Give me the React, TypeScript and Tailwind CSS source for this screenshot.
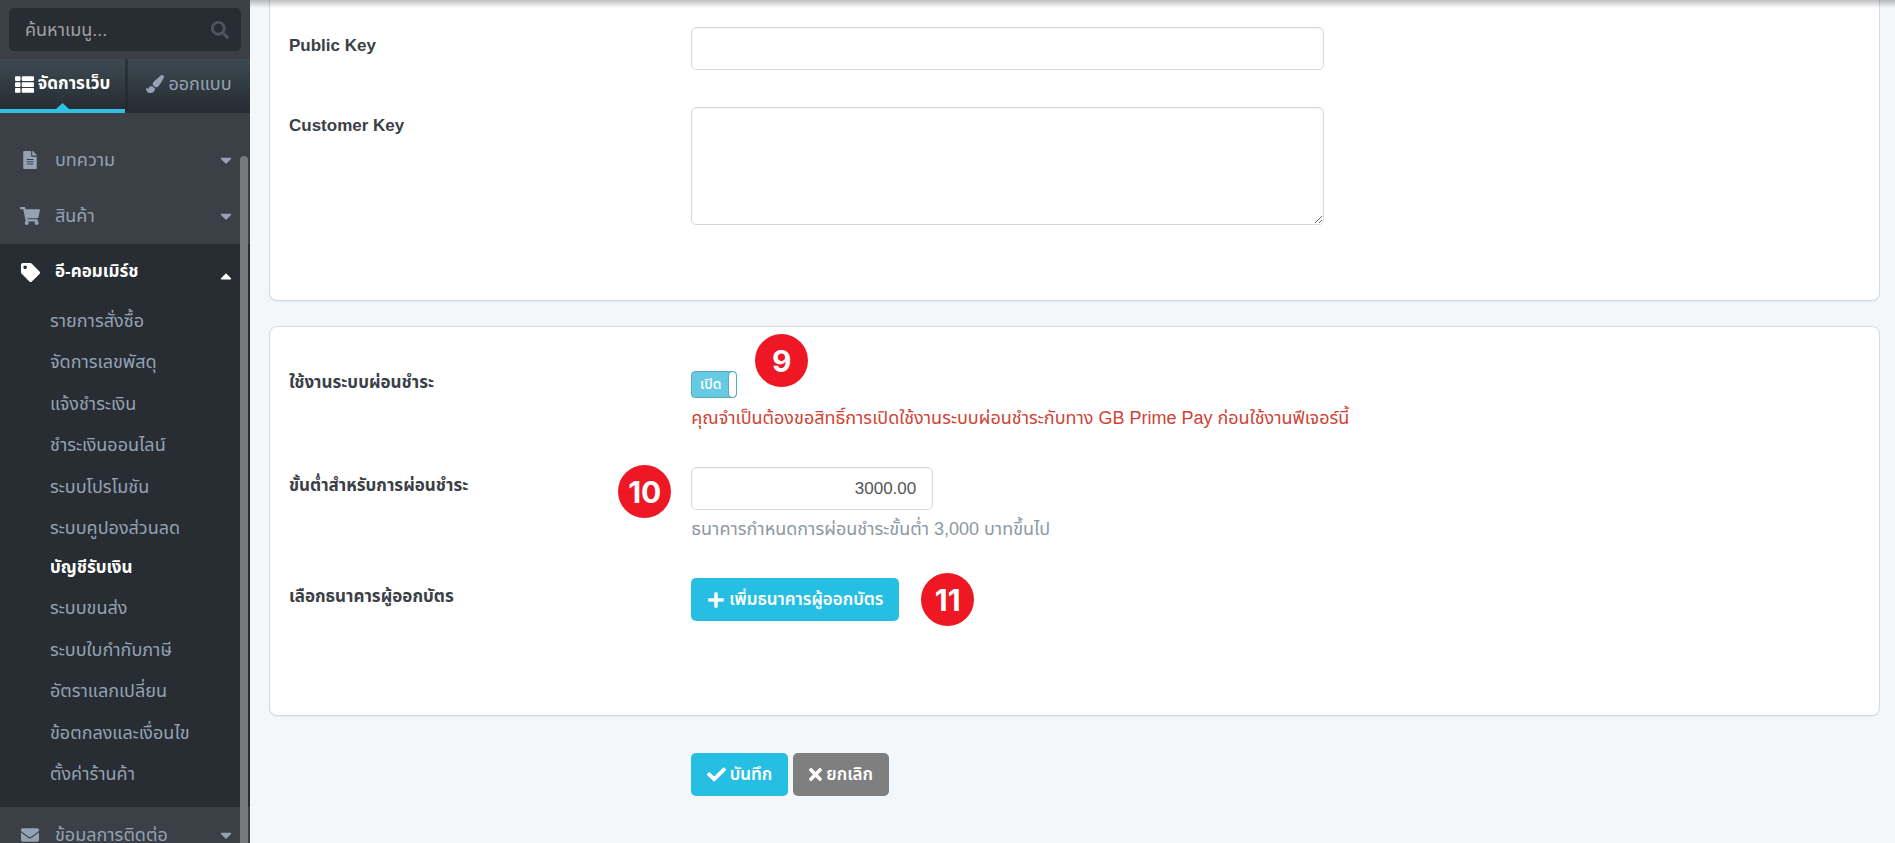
import { useState } from "react";
import type { ReactNode } from "react";
import {
  FaCaretDown,
  FaCaretUp,
  FaCheck,
  FaEnvelope,
  FaFileAlt,
  FaPaintBrush,
  FaPlus,
  FaSearch,
  FaShoppingCart,
  FaTag,
  FaThList,
  FaTimes,
} from "react-icons/fa";

const ecommerceMenu = [
  "รายการสั่งซื้อ",
  "จัดการเลขพัสดุ",
  "แจ้งชำระเงิน",
  "ชำระเงินออนไลน์",
  "ระบบโปรโมชัน",
  "ระบบคูปองส่วนลด",
  "บัญชีรับเงิน",
  "ระบบขนส่ง",
  "ระบบใบกำกับภาษี",
  "อัตราแลกเปลี่ยน",
  "ข้อตกลงและเงื่อนไข",
  "ตั้งค่าร้านค้า",
];

const inputClass =
  "block rounded-[5px] border border-[#d2dbe0] bg-white px-4 text-[17px] text-[#555] shadow-[inset_0_1px_2px_rgba(0,0,0,0.06)] outline-none";

function MenuItem({
  icon,
  title,
  open = false,
}: {
  icon: ReactNode;
  title: string;
  open?: boolean;
}) {
  return (
    <button
      className={`flex h-14 w-full shrink-0 items-center pr-[15px] pl-5 text-left ${
        open ? "text-[17px] font-bold text-white" : "text-lg text-[#95a2b3]"
      }`}
    >
      <span className="flex w-5 justify-center">{icon}</span>
      <span className="ml-[15px] flex-1">{title}</span>
      {open ? (
        <FaCaretUp className="mt-2 h-[18px] w-[18px]" />
      ) : (
        <FaCaretDown className="h-[18px] w-[18px]" />
      )}
    </button>
  );
}

function Sidebar() {
  return (
    <aside className="relative flex h-screen w-[250px] shrink-0 flex-col overflow-hidden bg-[#3a4046]">
      {/* ค้นหาเมนู */}
      <div className="px-[9px] py-2">
        <div className="flex h-[43px] items-center rounded-[5px] bg-[#272d33] pr-3 pl-4">
          <input
            aria-label="ค้นหาเมนู"
            placeholder="ค้นหาเมนู..."
            className="min-w-0 flex-1 bg-transparent text-lg text-white outline-none placeholder:text-[#a0a0a0]"
          />
          <FaSearch className="h-[18px] w-[18px] text-[#4d555e]" />
        </div>
      </div>

      {/* แท็บ */}
      <div className="flex h-[54px] shrink-0 bg-linear-to-b from-[#3d4a52] to-[#262b31]">
        <button className="relative flex w-[125px] items-center justify-center gap-1 border-b-4 border-[#2fc0e4] text-[17px] font-bold text-white">
          <FaThList className="h-[19px] w-[19px]" />
          จัดการเว็บ
          <svg
            className="absolute bottom-0 left-[56px]"
            width="13"
            height="6"
            viewBox="0 0 13 6"
          >
            <path d="M0 6 6.5 0 13 6z" fill="#2fc0e4" />
          </svg>
        </button>
        <button className="flex flex-1 items-center justify-center gap-1 border-b-4 border-l-[3px] border-b-transparent border-l-[#20262b]/60 text-lg text-[#95a2b3]">
          <FaPaintBrush className="h-[18px] w-[18px]" />
          ออกแบบ
        </button>
      </div>

      {/* เมนู */}
      <nav className="flex flex-1 flex-col pt-[19px]">
        <MenuItem
          icon={<FaFileAlt className="h-[18px] w-[18px]" />}
          title="บทความ"
        />
        <MenuItem
          icon={<FaShoppingCart className="h-5 w-5" />}
          title="สินค้า"
        />
        <div className="shrink-0 bg-[#272d33] pb-3">
          <MenuItem
            icon={<FaTag className="h-[19px] w-[19px]" />}
            title="อี-คอมเมิร์ช"
            open
          />
          <ul className="grid h-[495px]">
            {ecommerceMenu.map((name) => (
              <li key={name} className="flex items-center pl-[50px]">
                <a
                  href="#"
                  className={
                    name === "บัญชีรับเงิน"
                      ? "text-[17px] font-bold text-white"
                      : "text-lg text-[#95a2b3]"
                  }
                >
                  {name}
                </a>
              </li>
            ))}
          </ul>
        </div>
        <MenuItem
          icon={<FaEnvelope className="h-[18px] w-[18px]" />}
          title="ข้อมูลการติดต่อ"
        />
      </nav>

      {/* แถบเลื่อน */}
      <div className="absolute top-[156px] right-[2px] bottom-0 w-2 rounded-t-full bg-[#75797b]" />
    </aside>
  );
}

function FormRow({
  label,
  htmlFor,
  children,
}: {
  label: string;
  htmlFor: string;
  children: ReactNode;
}) {
  return (
    <div className="grid grid-cols-12">
      <label
        htmlFor={htmlFor}
        className="col-span-3 px-[19px] pt-[7px] text-[17px] leading-6 font-bold text-[#3a4046]"
      >
        {label}
      </label>
      {children}
    </div>
  );
}

function StepBadge({ step, className }: { step: number; className: string }) {
  return (
    <span
      className={`absolute flex h-[53px] w-[53px] items-center justify-center rounded-full bg-[#ee1723] font-['Inter',sans-serif] text-[30px] leading-none font-bold text-white ${className}`}
    >
      {step}
    </span>
  );
}

export default function App() {
  const [installment, setInstallment] = useState(true);
  const [minimum, setMinimum] = useState("3000.00");

  return (
    <div className="flex h-screen overflow-hidden bg-[#f3f7fa] font-['Liberation_Sans','Noto_Sans_Thai','Noto_Sans',sans-serif]">
      <Sidebar />

      <main className="relative flex-1 pr-[15px] pl-[19px]">
        <div className="pointer-events-none absolute inset-x-0 top-0 h-2 bg-linear-to-b from-black/25 to-transparent" />

        {/* คีย์ */}
        <section className="flex flex-col gap-[37px] rounded-b-lg border border-t-0 border-[#d5dadf] bg-white pt-[27px] pb-[75px] shadow-[0_1px_1px_rgba(0,0,0,0.05)]">
          <FormRow label="Public Key" htmlFor="publicKey">
            <div className="col-span-5 px-[19px]">
              <input id="publicKey" className={`${inputClass} h-[43px] w-full`} />
            </div>
          </FormRow>
          <FormRow label="Customer Key" htmlFor="customerKey">
            <div className="col-span-5 px-[19px]">
              <textarea
                id="customerKey"
                className={`${inputClass} h-[118px] w-full resize`}
              />
            </div>
          </FormRow>
        </section>

        {/* ผ่อนชำระ */}
        <section className="mt-[25px] flex flex-col gap-[37px] rounded-lg border border-[#d5dadf] bg-white pt-[37px] pb-[94px] shadow-[0_1px_1px_rgba(0,0,0,0.05)]">
          <FormRow label="ใช้งานระบบผ่อนชำระ" htmlFor="installment">
            <div className="relative col-span-9 px-[19px] pt-[7px]">
              <label className="flex h-[27px] w-[46px] cursor-pointer overflow-hidden rounded-[4px] border border-[#5aa9bd] bg-[#66cbe2] text-sm leading-[25px] font-medium text-white">
                <input
                  id="installment"
                  type="checkbox"
                  className="sr-only"
                  checked={installment}
                  onChange={(e) => setInstallment(e.target.checked)}
                />
                <span className="flex-1 text-center">
                  {installment ? "เปิด" : "ปิด"}
                </span>
                <span className="w-[7px] rounded-[3px] bg-white outline outline-[#5aa9bd]" />
              </label>
              <p className="mt-2 text-lg leading-6 text-[#cf4336]">
                คุณจำเป็นต้องขอสิทธิ์การเปิดใช้งานระบบผ่อนชำระกับทาง GB Prime Pay
                ก่อนใช้งานฟีเจอร์นี้
              </p>
              <StepBadge step={9} className="-top-[30px] left-[83px]" />
            </div>
          </FormRow>
          <FormRow label="ขั้นต่ำสำหรับการผ่อนชำระ" htmlFor="minimum">
            <div className="relative col-span-9 px-[19px]">
              <input
                id="minimum"
                value={minimum}
                onChange={(e) => setMinimum(e.target.value)}
                className={`${inputClass} h-[43px] w-[242px] text-right`}
              />
              <p className="mt-[7px] text-lg leading-6 text-[#8e979f]">
                ธนาคารกำหนดการผ่อนชำระขั้นต่ำ 3,000 บาทขึ้นไป
              </p>
              <StepBadge step={10} className="-top-[2px] -left-[54px]" />
            </div>
          </FormRow>
          <FormRow label="เลือกธนาคารผู้ออกบัตร" htmlFor="addBank">
            <div className="relative col-span-9 px-[19px]">
              <button
                id="addBank"
                className="flex h-[43px] items-center gap-1 rounded-[5px] bg-[#26bfe3] px-4 text-[17px] font-semibold text-white"
              >
                <FaPlus className="h-[18px] w-[18px]" />
                เพิ่มธนาคารผู้ออกบัตร
              </button>
              <StepBadge step={11} className="-top-[5px] left-[249px]" />
            </div>
          </FormRow>
        </section>

        <div className="mt-[37px] grid grid-cols-12">
          <div className="col-span-9 col-start-4 flex gap-[5px] px-[19px]">
            <button className="flex h-[43px] items-center gap-1 rounded-[5px] bg-[#26bfe3] px-4 text-[17px] font-semibold text-white">
              <FaCheck className="h-[19px] w-[19px]" />
              บันทึก
            </button>
            <button className="flex h-[43px] items-center gap-1 rounded-[5px] bg-[#7f7f7f] px-4 text-[17px] font-semibold text-white">
              <FaTimes className="h-[19px] w-[13px]" />
              ยกเลิก
            </button>
          </div>
        </div>
      </main>
    </div>
  );
}
